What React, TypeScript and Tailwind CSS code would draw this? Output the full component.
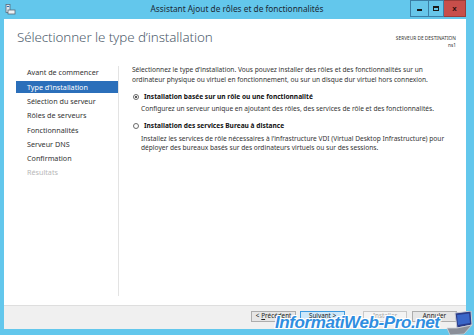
import React from "react";

const navItems = [
  "Avant de commencer",
  "Type d\u2019installation",
  "Sélection du serveur",
  "Rôles de serveurs",
  "Fonctionnalités",
  "Serveur DNS",
  "Confirmation",
  "Résultats",
];

function Radio({ checked }: { checked?: boolean }) {
  return (
    <div className="w-[6px] h-[6px] rounded-full border border-[#6b6b6b] bg-white flex items-center justify-center shrink-0">
      {checked && <div className="w-[2.5px] h-[2.5px] rounded-full bg-[#222]" />}
    </div>
  );
}

export default function App() {
  return (
    <div
      className="relative w-[474px] h-[335px] bg-[#63c7ec] flex flex-col overflow-hidden"
      style={{ fontFamily: '"Noto Sans", "Open Sans", sans-serif' }}
    >
      {/* Title bar */}
      <div className="relative h-[19px] shrink-0 flex items-center justify-center">
        <svg className="absolute left-[5px] top-[4px]" width="11" height="11" viewBox="0 0 11 11">
          <rect x="1" y="0.5" width="4" height="8" fill="#dfe7ee" stroke="#5a6a78" strokeWidth="0.8" />
          <rect x="3" y="6" width="7" height="4" fill="#eef2f5" stroke="#5a6a78" strokeWidth="0.8" />
          <rect x="1.8" y="2" width="2.4" height="1" fill="#2f6fb0" />
        </svg>
        <span className="text-[8.3px] text-[#1b2a36]">Assistant Ajout de rôles et de fonctionnalités</span>
        <div className="absolute right-[8px] top-0 flex h-[17px]">
          <div className="w-[18px] h-full border border-[#3c7fa6] border-r-0 bg-[#67c6ea] flex items-end justify-center pb-[5px]">
            <div className="w-[5px] h-[2px] bg-[#1a1a1a]" />
          </div>
          <div className="w-[16px] h-full border border-[#3c7fa6] bg-[#67c6ea] flex items-center justify-center">
            <div className="w-[6px] h-[5px] border border-[#1a1a1a] border-t-2" />
          </div>
          <div className="w-[22px] h-full bg-[#c84e4a] border border-[#9c3c38] border-l-0 flex items-center justify-center">
            <span className="text-[8px] font-bold text-[#2b0c0a] leading-none" style={{ fontFamily: '"Liberation Sans", sans-serif' }}>x</span>
          </div>
        </div>
      </div>

      {/* Client area */}
      <div className="ml-[4px] mr-[8px] mb-[6px] flex-1 flex flex-col bg-white min-h-0">
        {/* Header */}
        <div className="h-[39px] shrink-0 flex justify-between">
          <div className="pl-[13px] pt-[12px] text-[13.4px] font-light text-[#50606e] leading-none tracking-[-0.1px]">
            Sélectionner le type d’installation
          </div>
          <div className="pr-[10px] pt-[16px] flex flex-col items-end text-[4.8px] text-[#333] leading-[7px]">
            <span>SERVEUR DE DESTINATION</span>
            <span>ns1</span>
          </div>
        </div>

        {/* Body */}
        <div className="flex-1 flex min-h-0">
          <div className="w-[115px] shrink-0 pl-[12px] pt-[8px] pb-[9px] flex">
            <div className="flex-1 border-r border-[#e3e3e3] flex flex-col pt-[1px]">
              {navItems.map((it, i) => (
                <div
                  key={it}
                  className={
                    "h-[12px] mb-[2.3px] pl-[11px] flex items-center text-[7.2px] leading-none " +
                    (i === 1
                      ? "bg-[#2b6fba] text-white"
                      : i === 7
                      ? "text-[#b8b8b8]"
                      : "text-[#333]")
                  }
                >
                  {it}
                </div>
              ))}
            </div>
          </div>

          <div className="flex-1 pl-[13px] pt-[7px] text-[6.6px] leading-[9.5px] text-[#333]">
            <p>
              Sélectionnez le type d’installation. Vous pouvez installer des rôles et des fonctionnalités sur un
              <br />
              ordinateur physique ou virtuel en fonctionnement, ou sur un disque dur virtuel hors connexion.
            </p>
            <div className="mt-[8px] flex items-center gap-[5px] pl-[1px]">
              <Radio checked />
              <span className="font-bold text-[#111]">Installation basée sur un rôle ou une fonctionnalité</span>
            </div>
            <p className="pl-[9px] mt-[2.5px]">
              Configurez un serveur unique en ajoutant des rôles, des services de rôle et des fonctionnalités.
            </p>
            <div className="mt-[7.5px] flex items-center gap-[5px] pl-[1px]">
              <Radio />
              <span className="font-bold text-[#111]">Installation des services Bureau à distance</span>
            </div>
            <p className="pl-[9px] mt-[3px] leading-[9px]">
              Installez les services de rôle nécessaires à l’infrastructure VDI (Virtual Desktop Infrastructure) pour
              <br />
              déployer des bureaux basés sur des ordinateurs virtuels ou sur des sessions.
            </p>
          </div>
        </div>

        {/* Footer */}
        <div className="h-[24px] shrink-0 bg-[#f0f0f0] border-t border-[#dedede] flex items-center justify-end pr-[9px] pb-[2px]">
          <div className="flex items-center">
            <button className="w-[45px] h-[11px] border border-[#adadad] bg-[#e6e6e6] text-[6.3px] leading-none text-[#222] flex items-center justify-center">
              &lt; <span className="underline ml-[2px]">P</span>récédent
            </button>
            <button className="ml-[4px] w-[45px] h-[11px] border border-[#3c9ae0] bg-[#cde8fa] text-[6.3px] leading-none text-[#222] flex items-center justify-center">
              Sui<span className="underline">v</span>ant &gt;
            </button>
            <button className="ml-[18px] w-[44px] h-[11px] border border-[#c8c8c8] bg-[#f4f4f4] text-[6.3px] leading-none text-[#a8a8a8] flex items-center justify-center">
              Installer
            </button>
            <button className="ml-[5px] w-[45px] h-[11px] border border-[#adadad] bg-[#e6e6e6] text-[6.3px] leading-none text-[#222] flex items-center justify-center">
              Annuler
            </button>
          </div>
        </div>
      </div>

      {/* Watermark */}
      <div
        className="absolute left-[275px] top-[314px] text-[17px] font-bold italic text-[#2f8ee0] leading-none tracking-[-0.4px]"
        style={{
          fontFamily: '"Liberation Sans", Arial, sans-serif',
          textShadow:
            "1px 0 0 #fff, -1px 0 0 #fff, 0 1px 0 #fff, 0 -1px 0 #fff, 1px 1px 0 #fff, -1px -1px 0 #fff, 1px -1px 0 #fff, -1px 1px 0 #fff",
        }}
      >
        InformatiWeb-Pro.net
      </div>
      <svg className="absolute left-[446px] top-[311px]" width="28" height="24" viewBox="0 0 28 24">
        <path d="M9 2 L25 0 L26 14 L11 17 Z" fill="#2a3c8a" stroke="#c9ccd4" strokeWidth="1" />
        <path d="M11 4 L23 2.5 L24 12 L12 14 Z" fill="#3a66c8" />
        <path d="M1 17 L11 17 L26 14 L18 23 L4 24 Z" fill="#8a8f99" stroke="#d0d3d8" strokeWidth="0.8" />
      </svg>
    </div>
  );
}
